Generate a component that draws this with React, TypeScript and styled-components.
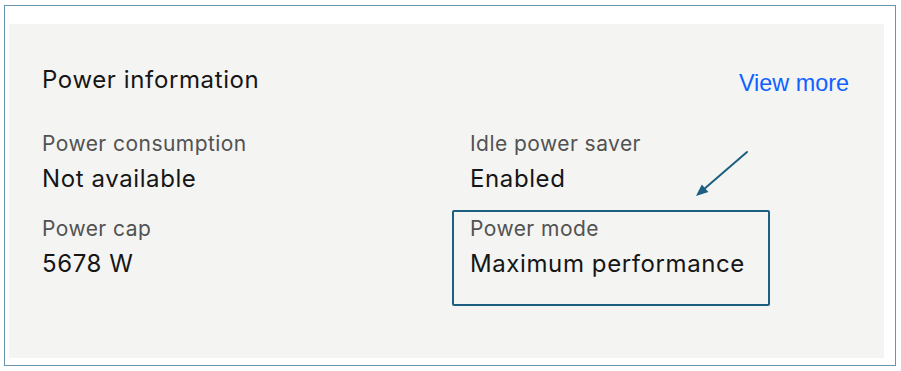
import React from 'react';
import styled, { createGlobalStyle, css } from 'styled-components';

const Global = createGlobalStyle`
  html, body { margin: 0; padding: 0; background: #ffffff; }
  body { font-family: Inter, "Noto Sans", sans-serif; -webkit-font-smoothing: antialiased; }
`;

const Frame = styled.div`
  box-sizing: border-box;
  margin: 5px 0 0 4px;
  width: 892px;
  height: 361px;
  border: 1px solid #6a95b1;
  padding: 18px 11px 7px 4px;
`;

const Panel = styled.section`
  position: relative;
  box-sizing: border-box;
  height: 100%;
  background: #f4f4f3;
  padding: 40px 35px 0 33px;
`;

const Header = styled.div`
  display: flex;
  justify-content: space-between;
  align-items: flex-start;
  height: 32px;
`;

const Title = styled.h2`
  margin: 0;
  font-size: 24px;
  line-height: 32px;
  font-weight: 400;
  letter-spacing: 0.62px;
  color: #161616;
`;

const Link = styled.a`
  font-family: "Liberation Sans", Arial, sans-serif;
  font-size: 23.4px;
  line-height: 32px;
  color: #0f62fe;
  text-decoration: none;
  padding-top: 3px;
`;

const Grid = styled.div`
  display: grid;
  grid-template-columns: 428px 1fr;
  row-gap: 20px;
  margin-top: 34px;
`;

const Item = styled.div<{ $highlight?: boolean }>`
  position: relative;
  ${(p) =>
    p.$highlight &&
    css`
      &::after {
        content: '';
        position: absolute;
        left: -18px;
        top: -5px;
        width: 318px;
        height: 96px;
        box-sizing: border-box;
        border: 2px solid #1d5f80;
        border-radius: 2px;
      }
    `}
`;

const Label = styled.div`
  font-size: 21px;
  line-height: 28px;
  letter-spacing: 0.45px;
  color: #525252;
`;

const Value = styled.div`
  margin-top: 5px;
  font-size: 24px;
  line-height: 32px;
  letter-spacing: 0.6px;
  color: #161616;
`;

const Arrow = styled.svg`
  position: absolute;
  left: 671px;
  top: 116px;
  width: 80px;
  height: 70px;
  overflow: visible;
`;

const items = [
  { label: 'Power consumption', value: 'Not available' },
  { label: 'Idle power saver', value: 'Enabled' },
  { label: 'Power cap', value: '5678 W' },
  { label: 'Power mode', value: 'Maximum performance', highlight: true },
];

export default function App() {
  return (
    <>
      <Global />
      <Frame>
        <Panel>
          <Header>
            <Title>Power information</Title>
            <Link href="#">View more</Link>
          </Header>
          <Grid>
            {items.map((it) => (
              <Item key={it.label} $highlight={it.highlight}>
                <Label>{it.label}</Label>
                <Value>{it.value}</Value>
              </Item>
            ))}
          </Grid>
          <Arrow viewBox="0 0 80 70">
            <line x1="67" y1="12" x2="25" y2="48.2" stroke="#1d5f80" strokeWidth="2" strokeLinecap="round" />
            <polygon points="16,56 28.4,52 21.8,44.4" fill="#1d5f80" />
          </Arrow>
        </Panel>
      </Frame>
    </>
  );
}
